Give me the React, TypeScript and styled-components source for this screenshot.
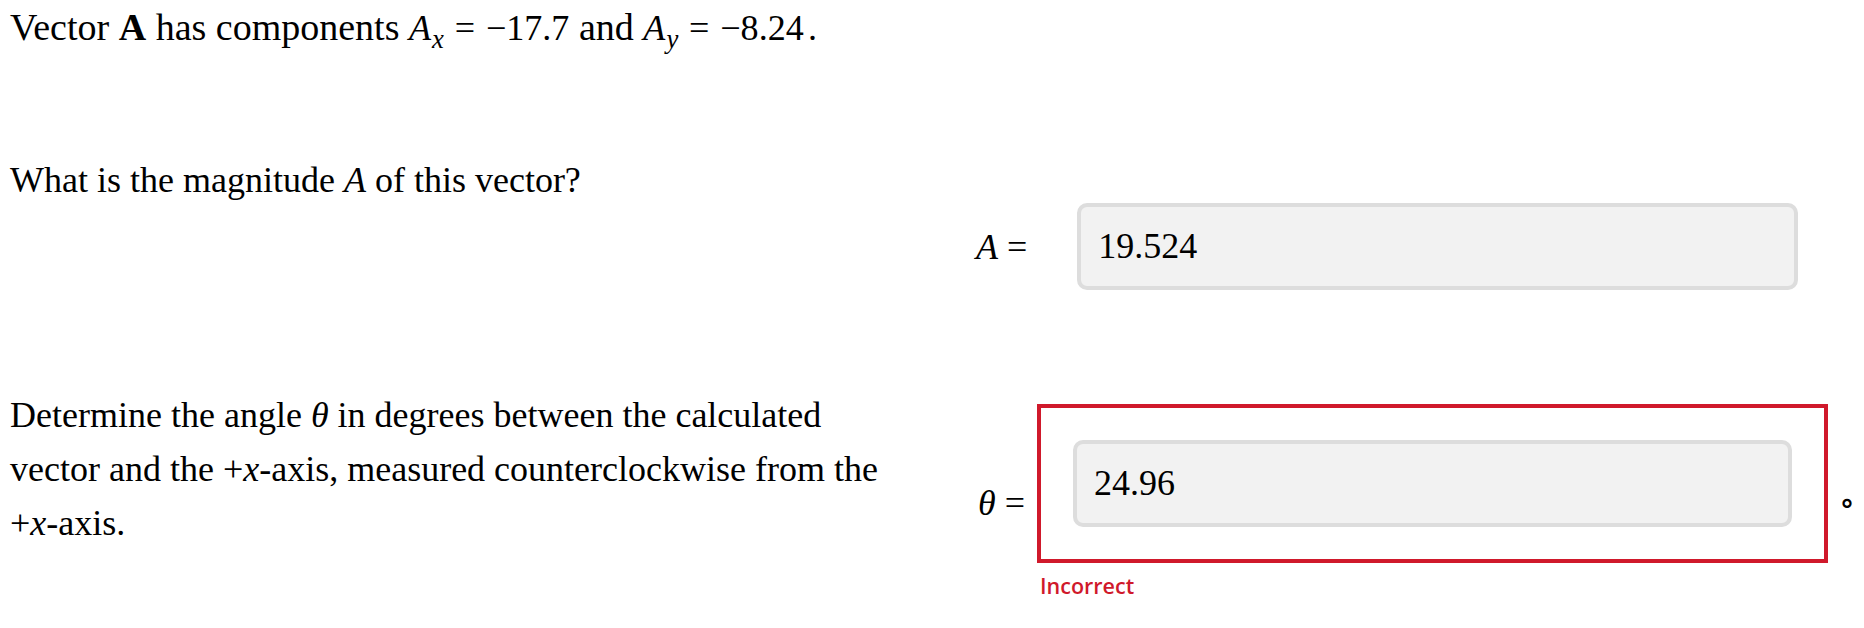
import React from "react";
import styled, { createGlobalStyle } from "styled-components";

const GlobalStyle = createGlobalStyle`
  html, body {
    margin: 0;
    padding: 0;
    background: #ffffff;
  }
  body {
    font-family: "Liberation Serif", "Times New Roman", serif;
    font-size: 36px;
    color: #000000;
  }
`;

const Page = styled.main`
  padding: 0 10px;
`;

const Intro = styled.p`
  margin: 0;
  font-size: 38px;
  line-height: 54px;
  white-space: nowrap;
`;

const Bold = styled.b`
  font-weight: 700;
`;

const MathExpr = styled.span`
  font-size: 0.95em;
`;

const MathVar = styled.i`
  font-style: italic;
`;

const Sub = styled.sub`
  font-size: 0.74em;
  font-style: italic;
  vertical-align: -0.3em;
  line-height: 0;
  margin-left: 0.04em;
`;

const Rel = styled.span`
  margin: 0 0.3em;
`;

const Period = styled.span`
  margin-left: 0.12em;
`;

const Part = styled.section<{ $top: number }>`
  display: grid;
  grid-template-columns: 966px auto;
  margin-top: ${(p) => p.$top}px;
  align-items: start;
`;

const Question = styled.p`
  margin: 0;
  line-height: 54px;
  max-width: 905px;
`;

const AnswerArea = styled.div<{ $top: number; $gap: number; $indent: number }>`
  display: flex;
  align-items: center;
  padding-top: ${(p) => p.$top}px;
  padding-left: ${(p) => p.$indent}px;
  gap: ${(p) => p.$gap}px;
`;

const Label = styled.label`
  line-height: 54px;
  white-space: nowrap;
`;

const AnswerInput = styled.input<{ $width: number }>`
  box-sizing: border-box;
  width: ${(p) => p.$width}px;
  height: 87px;
  margin: 0;
  padding: 0 0 2px 17px;
  border: 4px solid #dddddd;
  border-radius: 10px;
  background: #f2f2f2;
  font-family: "Liberation Serif", "Times New Roman", serif;
  font-size: 36px;
  color: #000000;
  outline: none;
`;

const Feedback = styled.div`
  display: flex;
  flex-direction: column;
`;

const WrongBox = styled.div`
  border: 4px solid #d0192b;
  padding: 32px;
`;

const Incorrect = styled.span`
  margin-top: 8px;
  padding-left: 3px;
  line-height: 30px;
  font-family: "Open Sans", "Noto Sans", sans-serif;
  font-weight: 600;
  font-size: 21.5px;
  color: #d0192b;
`;

const Unit = styled.span`
  margin-top: 16px;
  font-family: "DejaVu Sans", sans-serif;
  font-weight: 700;
  font-size: 28px;
  line-height: 28px;
`;

export default function App() {
  return (
    <>
      <GlobalStyle />
      <Page>
        <Intro>
          Vector <Bold>A</Bold> has components{" "}
          <MathExpr>
            <MathVar>A</MathVar>
            <Sub>x</Sub>
            <Rel>=</Rel>−17.7
          </MathExpr>{" "}
          and{" "}
          <MathExpr>
            <MathVar>A</MathVar>
            <Sub>y</Sub>
            <Rel>=</Rel>−8.24<Period>.</Period>
          </MathExpr>
        </Intro>

        <Part $top={98}>
          <Question>
            What is the magnitude <MathVar>A</MathVar> of this vector?
          </Question>
          <AnswerArea $top={50} $gap={50} $indent={0}>
            <Label htmlFor="mag">
              <MathVar>A</MathVar> =
            </Label>
            <AnswerInput id="mag" $width={721} readOnly value="19.524" />
          </AnswerArea>
        </Part>

        <Part $top={98}>
          <Question>
            Determine the angle <MathVar>θ</MathVar> in degrees between the
            calculated vector and the +<MathVar>x</MathVar>-axis, measured
            counterclockwise from the +<MathVar>x</MathVar>-axis.
          </Question>
          <AnswerArea $top={16} $gap={12} $indent={2}>
            <Label htmlFor="angle">
              <MathVar>θ</MathVar> =
            </Label>
            <Feedback>
              <WrongBox>
                <AnswerInput id="angle" $width={719} readOnly value="24.96" />
              </WrongBox>
              <Incorrect>Incorrect</Incorrect>
            </Feedback>
            <Unit>°</Unit>
          </AnswerArea>
        </Part>
      </Page>
    </>
  );
}
